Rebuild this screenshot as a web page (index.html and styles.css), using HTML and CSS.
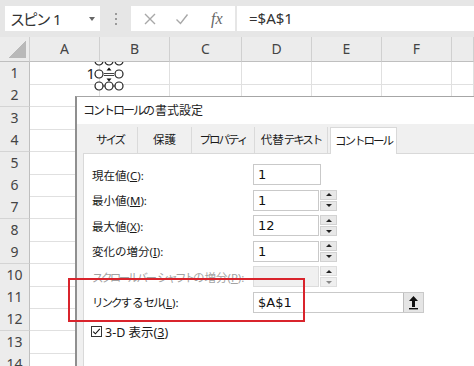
FILE: index.html
```html
<!DOCTYPE html>
<html lang="ja">
<head>
<meta charset="utf-8">
<title>コントロールの書式設定</title>
<link rel="stylesheet" href="styles.css">
</head>
<body>
<div class="app">
  <div class="toolbar">
    <div class="namebox"><span class="nb-text"><span class="k">スピン</span> 1</span><span class="caret"></span></div>
    <div class="grip"><i></i><i></i><i></i></div>
    <div class="fxbox">
      <svg class="ico ico-x" width="14" height="14" viewBox="0 0 14 14"><path d="M2 2 L12 12 M12 2 L2 12" stroke="#a8a8a8" stroke-width="1.4" fill="none"/></svg>
      <svg class="ico ico-check" width="14" height="14" viewBox="0 0 14 14"><path d="M1.5 7.5 L5.5 11.5 L12.5 2.5" stroke="#a8a8a8" stroke-width="1.4" fill="none"/></svg>
      <span class="fx">fx</span>
    </div>
    <div class="formula">=$A$1</div>
  </div>

  <div class="sheet">
    <div class="colheads">
      <div class="corner"></div>
      <div class="ch">A</div><div class="ch">B</div><div class="ch">C</div><div class="ch">D</div><div class="ch">E</div><div class="ch">F</div><div class="ch"></div>
    </div>
    <div class="rows">
      <div class="row"><div class="rh">1</div><div class="c num">1</div><div class="c"></div><div class="c"></div><div class="c"></div><div class="c"></div><div class="c"></div><div class="c"></div></div>
      <div class="row"><div class="rh">2</div><div class="c"></div><div class="c"></div><div class="c"></div><div class="c"></div><div class="c"></div><div class="c"></div><div class="c"></div></div>
      <div class="row"><div class="rh">3</div><div class="c"></div><div class="c"></div><div class="c"></div><div class="c"></div><div class="c"></div><div class="c"></div><div class="c"></div></div>
      <div class="row"><div class="rh">4</div><div class="c"></div><div class="c"></div><div class="c"></div><div class="c"></div><div class="c"></div><div class="c"></div><div class="c"></div></div>
      <div class="row"><div class="rh">5</div><div class="c"></div><div class="c"></div><div class="c"></div><div class="c"></div><div class="c"></div><div class="c"></div><div class="c"></div></div>
      <div class="row"><div class="rh">6</div><div class="c"></div><div class="c"></div><div class="c"></div><div class="c"></div><div class="c"></div><div class="c"></div><div class="c"></div></div>
      <div class="row"><div class="rh">7</div><div class="c"></div><div class="c"></div><div class="c"></div><div class="c"></div><div class="c"></div><div class="c"></div><div class="c"></div></div>
      <div class="row"><div class="rh">8</div><div class="c"></div><div class="c"></div><div class="c"></div><div class="c"></div><div class="c"></div><div class="c"></div><div class="c"></div></div>
      <div class="row"><div class="rh">9</div><div class="c"></div><div class="c"></div><div class="c"></div><div class="c"></div><div class="c"></div><div class="c"></div><div class="c"></div></div>
      <div class="row"><div class="rh">10</div><div class="c"></div><div class="c"></div><div class="c"></div><div class="c"></div><div class="c"></div><div class="c"></div><div class="c"></div></div>
      <div class="row"><div class="rh">11</div><div class="c"></div><div class="c"></div><div class="c"></div><div class="c"></div><div class="c"></div><div class="c"></div><div class="c"></div></div>
      <div class="row"><div class="rh">12</div><div class="c"></div><div class="c"></div><div class="c"></div><div class="c"></div><div class="c"></div><div class="c"></div><div class="c"></div></div>
      <div class="row"><div class="rh">13</div><div class="c"></div><div class="c"></div><div class="c"></div><div class="c"></div><div class="c"></div><div class="c"></div><div class="c"></div></div>
      <div class="row"><div class="rh">14</div><div class="c"></div><div class="c"></div><div class="c"></div><div class="c"></div><div class="c"></div><div class="c"></div><div class="c"></div></div>
    </div>

    <svg class="spin-obj" width="32" height="32" viewBox="0 0 32 32">
      <line x1="6" y1="24" x2="26" y2="24" stroke="#333" stroke-width="1"/>
      <line x1="11" y1="11.5" x2="21" y2="11.5" stroke="#444" stroke-width="1"/>
      <line x1="11" y1="13.5" x2="21" y2="13.5" stroke="#444" stroke-width="1"/>
      <path d="M13.5 8.5 L16 5.5 L18.5 8.5 Z" fill="#111"/>
      <path d="M13.5 16.5 L16 19.5 L18.5 16.5 Z" fill="#111"/>
      <g fill="#fff" stroke="#222" stroke-width="1.2">
        <circle cx="6" cy="-1" r="4"/><circle cx="16" cy="-1" r="4"/><circle cx="26" cy="-1" r="4"/>
        <circle cx="6" cy="12" r="4"/><circle cx="26" cy="12" r="4"/>
        <circle cx="6" cy="24" r="4"/><circle cx="16" cy="24" r="4"/><circle cx="26" cy="24" r="4"/>
      </g>
    </svg>
  </div>

  <div class="dialog">
    <div class="dlg-title"><span class="k">コントロール</span>の書式設定</div>
    <div class="tabs">
      <div class="tab w1"><span class="k">サイズ</span></div>
      <div class="tab w2">保護</div>
      <div class="tab w3"><span class="k">プロパティ</span></div>
      <div class="tab w4">代替<span class="k">テキスト</span></div>
      <div class="tab active"><span class="k">コントロール</span></div>
    </div>
    <div class="panel">
      <div class="form">
        <div class="lbl">現在値(<u>C</u>):</div>
        <div class="field"><div class="tb">1</div></div>

        <div class="lbl">最小値(<u>M</u>):</div>
        <div class="field"><div class="tb short">1</div><div class="spin"><span class="up"></span><span class="dn"></span></div></div>

        <div class="lbl">最大値(<u>X</u>):</div>
        <div class="field"><div class="tb short">12</div><div class="spin"><span class="up"></span><span class="dn"></span></div></div>

        <div class="lbl">変化の増分(<u>I</u>):</div>
        <div class="field"><div class="tb short">1</div><div class="spin"><span class="up"></span><span class="dn"></span></div></div>

        <div class="lbl disabled"><span class="k">スクロールバー</span> <span class="k">シャフト</span>の増分(<u>P</u>):</div>
        <div class="field"><div class="tb short off"></div><div class="spin off"><span class="up"></span><span class="dn"></span></div></div>

        <div class="lbl"><span class="k">リンク</span>する<span class="k">セル</span>(<u>L</u>):</div>
        <div class="field"><div class="tb wide">$A$1<span class="refbtn"><svg width="13" height="15" viewBox="0 0 13 15"><path d="M6.5 1 L11 6 H8 V12 H5 V6 H2 Z" fill="#111"/><rect x="2" y="13" width="9" height="1.4" fill="#111"/></svg></span></div></div>
      </div>
      <div class="check-row">
        <svg class="cb" width="11" height="11" viewBox="0 0 11 11"><rect x="0.5" y="0.5" width="10" height="10" fill="#fff" stroke="#333"/><path d="M2.2 5.6 L4.4 7.8 L8.8 2.8" stroke="#111" stroke-width="1.1" fill="none"/></svg>
        <span>3-D 表示(<u>3</u>)</span>
      </div>
    </div>
  </div>

  <div class="highlight"></div>
</div>
</body>
</html>
```

FILE: styles.css
```css
* { box-sizing: border-box; }
html, body { margin: 0; padding: 0; }
body {
  width: 474px;
  height: 366px;
  overflow: hidden;
  background: #fff;
  font-family: "Noto Sans", "Noto Sans CJK JP", sans-serif;
  color: #222;
}
.app {
  position: relative;
  width: 474px;
  height: 366px;
  overflow: hidden;
}
.k { letter-spacing: -2px; }

/* toolbar */
.toolbar {
  height: 37px;
  background: #e6e6e6;
  display: flex;
  align-items: flex-start;
  padding-top: 6px;
}
.namebox {
  margin-left: 5px;
  width: 95px;
  height: 25px;
  background: #fff;
  display: flex;
  align-items: center;
  padding-left: 5px;
  font-family: "Noto Sans", "Noto Sans CJK JP", sans-serif;
  font-size: 15px;
  color: #333;
}
.caret {
  margin-left: auto;
  margin-right: 5px;
  width: 0;
  height: 0;
  border-left: 3.5px solid transparent;
  border-right: 3.5px solid transparent;
  border-top: 4px solid #666;
}
.grip {
  width: 31px;
  height: 25px;
  display: flex;
  flex-direction: column;
  align-items: center;
  justify-content: center;
  gap: 3px;
}
.grip i {
  width: 2px;
  height: 2px;
  background: #9a9a9a;
}
.fxbox {
  width: 104px;
  height: 25px;
  background: #fff;
  display: flex;
  align-items: center;
  padding-left: 12px;
}
.ico-x { margin-right: 18px; }
.ico-check { margin-right: 22px; }
.fx {
  font-family: "Liberation Serif", serif;
  font-style: italic;
  font-size: 16px;
  color: #666;
}
.formula {
  margin-left: 2px;
  flex: 1;
  height: 25px;
  background: #fff;
  padding-left: 12px;
  font-family: "Noto Sans", sans-serif;
  font-size: 15px;
  line-height: 25px;
  color: #333;
}

/* sheet */
.sheet {
  position: relative;
}
.colheads, .row {
  display: grid;
  grid-template-columns: 30px 70px 70px 72px 70px 70px 70px 1fr;
}
.colheads { height: 25px; }
.corner {
  background: #ececec linear-gradient(to bottom right, transparent 50%, #b9b9b9 50%) no-repeat right 3px bottom 3px / 17px 17px;
  border-right: 1px solid #cfcfcf;
  border-bottom: 1px solid #bfbfbf;
}
.ch {
  background: #ececec;
  border-right: 1px solid #d0d0d0;
  border-bottom: 1px solid #bfbfbf;
  text-align: center;
  font-size: 14px;
  line-height: 24px;
  color: #444;
}
.row { height: 22.4px; }
.rh {
  background: #ececec;
  border-right: 1px solid #bfbfbf;
  border-bottom: 1px solid #d4d4d4;
  text-align: center;
  font-size: 14px;
  line-height: 22px;
  color: #444;
}
.c {
  border-right: 1px solid #e0e0e0;
  border-bottom: 1px solid #e0e0e0;
}
.c.num {
  text-align: right;
  padding-right: 4px;
  font-size: 15px;
  line-height: 22px;
  color: #222;
}
.spin-obj {
  position: absolute;
  left: 93px;
  top: 25px;
}

/* dialog */
.dialog {
  position: absolute;
  left: 75px;
  top: 96px;
  right: 0;
  bottom: 0;
  background: #f0f0f0;
  border-top: 1px solid #a6a6a6;
  border-left: 2px solid #8f8f8f;
  font-family: "Noto Sans", "Noto Sans CJK JP", sans-serif;
  font-size: 11.5px;
  color: #1a1a1a;
  display: flex;
  flex-direction: column;
}
.dlg-title {
  height: 27px;
  background: #fff;
  padding-left: 6px;
  line-height: 27px;
  font-size: 12px;
  color: #222;
}
.tabs {
  height: 29px;
  display: flex;
  align-items: flex-end;
  padding-left: 6px;
}
.tab {
  height: 26px;
  line-height: 25px;
  text-align: center;
  white-space: nowrap;
  border-right: 1px solid #dadada;
}
.w1 { width: 55px; }
.w2 { width: 54px; }
.w3 { width: 63px; }
.w4 { width: 73px; }
.tab.active {
  width: 67px;
  height: 27px;
  margin-left: 2px;
  margin-bottom: -1px;
  background: #fff;
  border: 1px solid #d9d9d9;
  border-bottom: none;
  position: relative;
  z-index: 1;
}
.panel {
  flex: 1;
  margin-left: 6px;
  background: #fff;
  border: 1px solid #d9d9d9;
  border-right: none;
  border-bottom: none;
  padding: 10px 0 0 8px;
}
.form {
  display: grid;
  grid-template-columns: 161px auto;
  grid-auto-rows: 21px;
  row-gap: 4.6px;
  align-items: center;
}
.lbl {
  white-space: nowrap;
}
.lbl u { text-underline-offset: 1px; }
.lbl.disabled { color: #a3a3a3; }
.lbl.disabled .k { letter-spacing: -2.6px; }
.field {
  display: flex;
  height: 21px;
  gap: 1px;
}
.tb {
  width: 68px;
  height: 21px;
  border: 1px solid #c9c9c9;
  background: #fff;
  padding-left: 4px;
  font-family: "DejaVu Sans", sans-serif;
  font-size: 13px;
  line-height: 19px;
  color: #111;
}
.tb.short { width: 66px; }
.tb.off { background: #f0f0f0; border-color: #dcdcdc; }
.tb.wide {
  width: 171px;
  display: flex;
  align-items: center;
  justify-content: space-between;
  padding-right: 0;
}
.refbtn {
  width: 20px;
  height: 19px;
  background: #e5e5e5;
  border-left: 1px solid #bdbdbd;
  display: flex;
  align-items: center;
  justify-content: center;
}
.spin {
  width: 17px;
  height: 21px;
  display: flex;
  flex-direction: column;
  gap: 1px;
}
.spin span {
  flex: 1;
  background: #e8e8e8;
  border: 1px solid #d2d2d2;
  display: flex;
  align-items: center;
  justify-content: center;
}
.spin .up::before {
  content: "";
  border-left: 3px solid transparent;
  border-right: 3px solid transparent;
  border-bottom: 3px solid #222;
}
.spin .dn::before {
  content: "";
  border-left: 3px solid transparent;
  border-right: 3px solid transparent;
  border-top: 3px solid #222;
}
.spin.off span { background: #efefef; border-color: #dedede; }
.spin.off .dn::before { border-top-color: #888; }
.check-row {
  margin-top: 12px;
  margin-left: -1px;
  height: 14px;
  display: flex;
  align-items: center;
  gap: 3px;
  font-size: 12.5px;
}
.check-row .cb { flex: none; }

/* red highlight */
.highlight {
  position: absolute;
  left: 68px;
  top: 278px;
  width: 237px;
  height: 44px;
  border: 2px solid #d9242c;
}
```
